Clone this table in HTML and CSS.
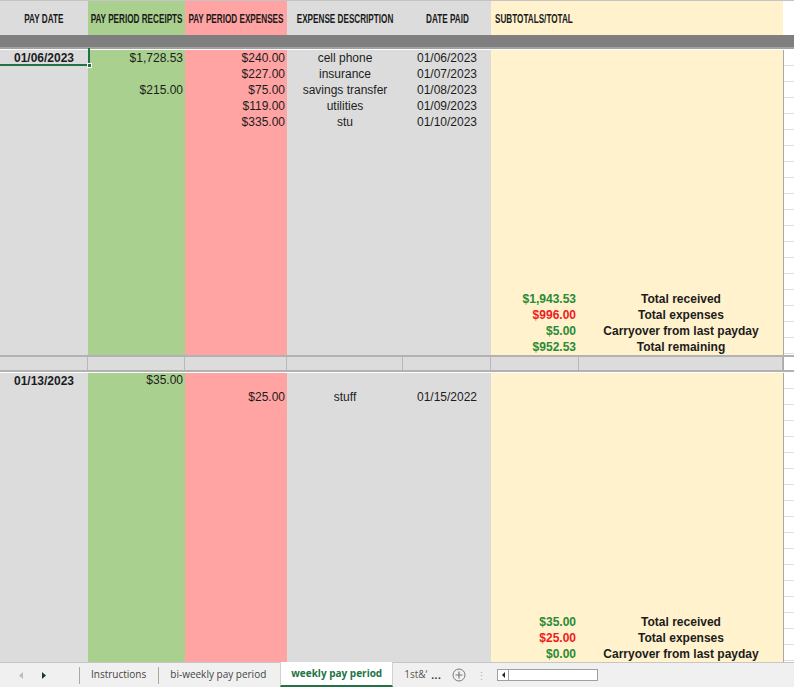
FILE: index.html
```html
<!DOCTYPE html>
<html>
<head>
<meta charset="utf-8">
<link rel="stylesheet" href="styles.css">
</head>
<body>
<div class="sheet">
  <div class="cols hdr">
    <div class="g"><span>PAY DATE</span></div>
    <div class="gr"><span>PAY PERIOD RECEIPTS</span></div>
    <div class="pk"><span>PAY PERIOD EXPENSES</span></div>
    <div class="g"><span>EXPENSE DESCRIPTION</span></div>
    <div class="g"><span>DATE PAID</span></div>
    <div class="y left"><span>SUBTOTALS/TOTAL</span></div>
    <div class="y"></div>
    <div class="w"></div>
  </div>
  <div class="bar"></div>

  <div class="cols block">
    <div class="col g"><div class="ln ctr b">01/06/2023</div></div>
    <div class="col gr">
      <div class="ln r">$1,728.53</div>
      <div class="ln"></div>
      <div class="ln r">$215.00</div>
    </div>
    <div class="col pk">
      <div class="ln r">$240.00</div>
      <div class="ln r">$227.00</div>
      <div class="ln r">$75.00</div>
      <div class="ln r">$119.00</div>
      <div class="ln r">$335.00</div>
    </div>
    <div class="col g">
      <div class="ln ctr">cell phone</div>
      <div class="ln ctr">insurance</div>
      <div class="ln ctr">savings transfer</div>
      <div class="ln ctr">utilities</div>
      <div class="ln ctr">stu</div>
    </div>
    <div class="col g">
      <div class="ln ctr">01/06/2023</div>
      <div class="ln ctr">01/07/2023</div>
      <div class="ln ctr">01/08/2023</div>
      <div class="ln ctr">01/09/2023</div>
      <div class="ln ctr">01/10/2023</div>
    </div>
    <div class="col y">
      <div class="tot">
        <div class="ln r b pos">$1,943.53</div>
        <div class="ln r b neg">$996.00</div>
        <div class="ln r b pos">$5.00</div>
        <div class="ln r b pos">$952.53</div>
      </div>
    </div>
    <div class="col y">
      <div class="tot">
        <div class="ln ctr b">Total received</div>
        <div class="ln ctr b">Total expenses</div>
        <div class="ln ctr b">Carryover from last payday</div>
        <div class="ln ctr b">Total remaining</div>
      </div>
    </div>
    <div class="col wcol"></div>
  </div>

  <div class="cols sep">
    <div></div><div></div><div></div><div></div><div></div><div></div><div></div>
    <div class="wsep"></div>
  </div>

  <div class="cols block b2">
    <div class="col g"><div class="ln ctr b">01/13/2023</div></div>
    <div class="col gr">
      <div class="ln r up">$35.00</div>
    </div>
    <div class="col pk">
      <div class="ln"></div>
      <div class="ln r">$25.00</div>
    </div>
    <div class="col g">
      <div class="ln"></div>
      <div class="ln ctr">stuff</div>
    </div>
    <div class="col g">
      <div class="ln"></div>
      <div class="ln ctr">01/15/2022</div>
    </div>
    <div class="col y">
      <div class="tot">
        <div class="ln r b pos">$35.00</div>
        <div class="ln r b neg">$25.00</div>
        <div class="ln r b pos">$0.00</div>
      </div>
    </div>
    <div class="col y">
      <div class="tot">
        <div class="ln ctr b">Total received</div>
        <div class="ln ctr b">Total expenses</div>
        <div class="ln ctr b">Carryover from last payday</div>
      </div>
    </div>
    <div class="col wcol"></div>
  </div>

  <div class="selection"><span class="handle"></span></div>
</div>

<div class="tabs">
  <div class="nav">
    <svg class="tri off" width="4" height="7" viewBox="0 0 4 7"><path d="M4 0 L0 3.5 L4 7 Z"/></svg>
    <svg class="tri" width="4" height="7" viewBox="0 0 4 7"><path d="M0 0 L4 3.5 L0 7 Z"/></svg>
  </div>
  <span class="vsep"></span>
  <div class="tab">Instructions</div>
  <span class="vsep"></span>
  <div class="tab t2">bi-weekly pay period</div>
  <div class="tab active">weekly pay period</div>
  <div class="tab more">1st&amp;&#8216;</div>
  <span class="dots">...</span>
  <svg class="add" width="14" height="14" viewBox="0 0 14 14">
    <circle cx="7" cy="7" r="6" fill="none" stroke="#7a7a7a" stroke-width="1"/>
    <path d="M7 3.5 V10.5 M3.5 7 H10.5" stroke="#7a7a7a" stroke-width="1.2"/>
  </svg>
  <span class="vdots">&#8942;</span>
  <div class="hscroll">
    <span class="sbtn"><svg width="3" height="6" viewBox="0 0 3 6"><path d="M3 0 L0 3 L3 6 Z" fill="#222"/></svg></span>
    <span class="thumb"></span>
  </div>
</div>
</body>
</html>
```

FILE: styles.css
```css
* { box-sizing: border-box; }
html, body { margin: 0; padding: 0; }
body {
  width: 794px;
  height: 687px;
  overflow: hidden;
  background: #ffffff;
  font-family: "Liberation Sans", Arial, sans-serif;
  font-size: 12px;
  color: #1c1c1c;
}
.sheet {
  position: relative;
  height: 662px;
  overflow: hidden;
}
.cols {
  display: grid;
  grid-template-columns: 88px 97px 102px 116px 88px 88px 204px 11px;
}
.g { background: #dcdcdc; }
.gr { background: #a9d08e; }
.pk { background: #ffa3a3; }
.y { background: #fff2cc; }
.w { background: #ffffff; }

.hdr {
  height: 35px;
  border-top: 1px solid #c4c4c4;
}
.hdr > div {
  display: flex;
  align-items: center;
  justify-content: center;
  padding-top: 1px;
  font-family: "Liberation Sans", Arial, sans-serif;
  font-weight: bold;
  font-size: 12px;
  color: #1a1a1a;
  white-space: nowrap;
  min-width: 0;
}
.hdr > div > span {
  display: inline-block;
  transform: scaleX(0.68);
  transform-origin: center;
}
.hdr > div.left {
  justify-content: flex-start;
  padding-left: 4px;
}
.hdr > div.left > span { transform-origin: left center; }

.bar {
  height: 14px;
  background: #7f7f7f;
  border-bottom: 2px solid #a2a2a2;
}

.block {
  height: 306px;
  padding-top: 1px;
}
.block.b2 { padding-bottom: 16px; }
.col {
  display: flex;
  flex-direction: column;
  min-width: 0;
}
.ln {
  height: 16px;
  line-height: 16px;
  white-space: nowrap;
  flex: none;
}
.r { text-align: right; padding-right: 2px; }
.ctr { text-align: center; }
.b { font-weight: bold; }
.pos { color: #2a8a36; }
.neg { color: #ee1c1c; }
.up { line-height: 15px; }
.tot { margin-top: auto; }
.col.y .ln.r { padding-right: 3px; }

.wcol {
  border-left: 1px solid #a8a8a8;
  background: repeating-linear-gradient(to bottom, #ffffff 0 15px, #dedede 15px 16px);
}

.sep {
  height: 17px;
  background: #dcdcdc;
  border-top: 2px solid #b2b2b2;
  border-bottom: 2px solid #b2b2b2;
}
.sep > div { border-right: 1px solid #b8b8b8; }
.sep > div.wsep {
  border-right: 0;
  border-left: 1px solid #a8a8a8;
  background: #ffffff;
}

.selection {
  position: absolute;
  left: 0;
  top: 48px;
  width: 90px;
  height: 18px;
  border-right: 2px solid #217346;
  border-bottom: 2px solid #217346;
}
.handle {
  position: absolute;
  right: -4px;
  bottom: -4px;
  width: 5px;
  height: 5px;
  background: #217346;
  border: 1px solid #ffffff;
}

.tabs {
  height: 25px;
  background: #f0f0f0;
  border-top: 1px solid #c6c6c6;
  display: flex;
  align-items: center;
  font-family: "Open Sans", "Noto Sans", sans-serif;
  font-size: 10px;
  color: #444444;
}
.nav {
  width: 79px;
  display: flex;
  align-items: center;
  gap: 19px;
  padding-left: 19px;
}
.tri { fill: #1e3b2a; }
.tri.off { fill: #bdbdbd; }
.vsep {
  width: 1px;
  height: 17px;
  background: #a8a8a8;
}
.tab {
  padding: 0 12px 0 11px;
  white-space: nowrap;
  height: 24px;
  line-height: 22px;
}
.tab.t2 { padding-right: 14px; }
.tab.active {
  background: #ffffff;
  color: #217346;
  font-weight: bold;
  padding: 0 10px;
  border-bottom: 2px solid #217346;
  border-left: 1px solid #d0d0d0;
  border-right: 1px solid #d0d0d0;
  margin-top: -1px;
  height: 25px;
  line-height: 23px;
}
.tab.more { padding: 0 0 0 11px; color: #555555; }
.dots {
  font-weight: bold;
  color: #333333;
  margin-left: 4px;
  letter-spacing: 0.5px;
}
.add { margin-left: 11px; }
.vdots {
  margin-left: 10px;
  color: #b0b0b0;
  font-size: 11px;
}
.hscroll {
  margin-left: 10px;
  display: flex;
  height: 12px;
  border: 1px solid #a0a0a0;
  background: #ffffff;
}
.sbtn {
  width: 11px;
  display: flex;
  align-items: center;
  justify-content: center;
  border-right: 1px solid #a0a0a0;
}
.thumb {
  width: 88px;
}
```
